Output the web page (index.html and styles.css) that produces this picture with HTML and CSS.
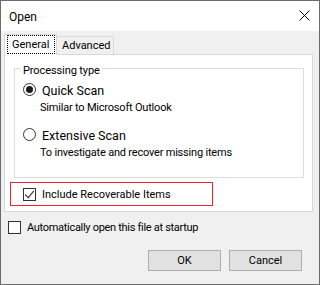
FILE: index.html
```html
<!DOCTYPE html>
<html lang="en">
<head>
<meta charset="utf-8">
<title>Open</title>
<link rel="stylesheet" href="styles.css">
</head>
<body>
<div class="window">
  <div class="titlebar">
    <span class="title">Open</span>
    <svg class="close" width="11" height="11" viewBox="0 0 11 11"><path d="M0.5 0.5L10.5 10.5M10.5 0.5L0.5 10.5" stroke="#000" stroke-width="1" fill="none"/></svg>
  </div>
  <div class="body">
    <div class="tabs">
      <div class="tab active"><span class="focus">General</span></div>
      <div class="tab">Advanced</div>
    </div>
    <div class="panel">
      <div class="group">
        <div class="legend">Processing type</div>
        <div class="option"><span class="radio checked"></span><span class="opt-label">Quick Scan</span></div>
        <div class="desc">Similar to Microsoft Outlook</div>
        <div class="option second"><span class="radio"></span><span class="opt-label">Extensive Scan</span></div>
        <div class="desc">To investigate and recover missing items</div>
      </div>
      <div class="highlight">
        <span class="checkbox"><svg width="11" height="11" viewBox="0 0 11 11"><path d="M1.2 5.6L4.3 8.6L9.8 1.8" stroke="#333" stroke-width="1.1" fill="none"/></svg></span>
        <span class="check-label">Include Recoverable Items</span>
      </div>
    </div>
    <div class="auto">
      <span class="checkbox"></span>
      <span class="check-label narrow">Automatically open this file at startup</span>
    </div>
    <div class="buttons">
      <button class="btn">OK</button>
      <button class="btn">Cancel</button>
    </div>
  </div>
</div>
</body>
</html>
```

FILE: styles.css
```css
html, body {
  margin: 0;
  padding: 0;
}
body {
  font-family: Roboto, "Liberation Sans", sans-serif;
  font-size: 11px;
  color: #000;
  background: #fff;
}
.window {
  width: 320px;
  height: 285px;
  box-sizing: border-box;
  border: 1px solid #6b6b6b;
  background: #f0f0f0;
  display: flex;
  flex-direction: column;
}
.titlebar {
  flex: none;
  height: 30px;
  background: #fff;
  display: flex;
  align-items: center;
  justify-content: space-between;
  padding: 0 9px 0 8px;
}
.title {
  font-size: 12px;
  padding-top: 1px;
}
.close {
  display: block;
  align-self: flex-start;
  margin-top: 9px;
}
.body {
  padding: 3px 6px 0 3px;
}
.tabs {
  display: flex;
  align-items: flex-end;
  height: 20px;
}
.tab {
  box-sizing: border-box;
  height: 18px;
  width: 57px;
  border-top: 1px solid #d9d9d9;
  border-right: 1px solid #d9d9d9;
  padding-left: 5px;
  line-height: 17px;
  background: #f0f0f0;
}
.tab.active {
  position: relative;
  z-index: 1;
  height: 21px;
  width: 53px;
  margin-bottom: -1px;
  border-left: 1px solid #d9d9d9;
  padding-left: 2px;
  background: #fff;
}
.focus {
  display: block;
  box-sizing: border-box;
  width: 48px;
  height: 19px;
  border: 1px dotted #000;
  padding-left: 4px;
  line-height: 17px;
}
.panel {
  box-sizing: border-box;
  height: 158px;
  background: #fff;
  border: 1px solid #d9d9d9;
}
.group {
  margin: 13px 8px 0 9px;
  border: 1px solid #dcdcdc;
  padding: 0 0 17px 8px;
}
.legend {
  width: fit-content;
  margin: -5px 0 0 -2px;
  padding: 0 2px;
  background: #fff;
  line-height: 13px;
  letter-spacing: -0.1px;
}
.option {
  display: flex;
  align-items: flex-start;
  height: 16px;
  margin-top: 5px;
}
.option.second {
  margin-top: 12px;
}
.radio {
  flex: none;
  box-sizing: border-box;
  width: 13px;
  height: 13px;
  margin-top: 1px;
  border: 1px solid #333;
  border-radius: 50%;
  background: #fff;
  display: flex;
  align-items: center;
  justify-content: center;
}
.radio.checked::after {
  content: "";
  width: 7px;
  height: 7px;
  border-radius: 50%;
  background: #1a1a1a;
}
.opt-label {
  font-size: 12.5px;
  line-height: 15px;
  padding-top: 1px;
  margin-left: 6px;
}
.desc {
  margin: 3px 0 0 17px;
  line-height: 14px;
  letter-spacing: -0.2px;
}
.highlight {
  box-sizing: border-box;
  width: 203px;
  height: 24px;
  margin: 4px 0 0 5px;
  border: 1px solid #e52730;
  display: flex;
  align-items: center;
  padding-left: 12px;
}
.checkbox {
  flex: none;
  box-sizing: border-box;
  width: 13px;
  height: 13px;
  border: 1px solid #333;
  background: #fff;
  display: block;
}
.checkbox svg {
  display: block;
}
.check-label {
  margin-left: 6px;
  line-height: 13px;
}
.check-label.narrow {
  letter-spacing: -0.3px;
}
.auto {
  display: flex;
  align-items: center;
  height: 13px;
  margin: 9px 0 0 4px;
}
.buttons {
  display: flex;
  justify-content: flex-end;
  gap: 8px;
  margin: 16px 11px 0 0;
}
.btn {
  box-sizing: border-box;
  width: 73px;
  height: 21px;
  padding: 0;
  border: 1px solid #adadad;
  background: #e1e1e1;
  color: #000;
  font-family: inherit;
  font-size: 11px;
  line-height: 19px;
}
```
